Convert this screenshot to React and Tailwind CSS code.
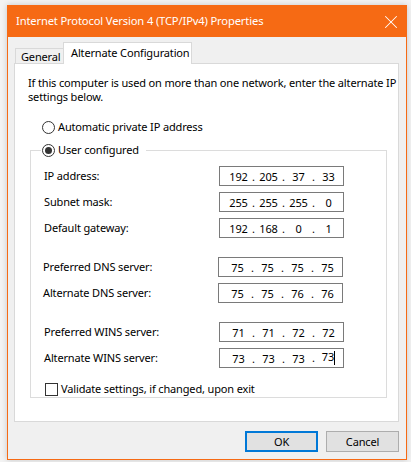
import { X } from 'lucide-react';

const font = { fontFamily: '"Segoe UI", "Noto Sans", sans-serif' };

function Radio({ checked }) {
  return (
    <span className="w-[13px] h-[13px] rounded-full border border-[#333] bg-white flex items-center justify-center shrink-0">
      {checked && <span className="w-[7px] h-[7px] rounded-full bg-[#333]" />}
    </span>
  );
}

function IpBox({ parts, caret }) {
  return (
    <div className="w-[125px] h-[20px] border border-[#7a7a7a] bg-white flex items-center pl-[7px] leading-none">
      {parts.map((p, i) => (
        <div key={i} className="flex items-center">
          {i > 0 && <span className="w-[7px] text-center">.</span>}
          <span className="w-[23px] text-center">
            {p}
            {caret && i === 3 && <span className="inline-block w-px h-[14px] bg-black align-middle" />}
          </span>
        </div>
      ))}
    </div>
  );
}

function Row({ label, parts, shift, caret, className = '' }) {
  return (
    <div className={`flex items-center h-[20px] ${shift ? 'pl-[12px]' : 'pl-[13px]'} ${className}`}>
      <span className="w-[175px]">{label}</span>
      <IpBox parts={parts} caret={caret} />
    </div>
  );
}

export default function App() {
  return (
    <div className="w-[411px] h-[462px] bg-[#f3f3f3] pt-[5px] pl-[7px] text-[11px] tracking-[-0.15px] text-black" style={font}>
      <div className="w-[400px] h-[455px] border border-[#f66a14] bg-[#f0f0f0] flex flex-col shadow-[0_0_6px_rgba(0,0,0,0.18)]">
        <div className="h-[31px] bg-[#f66a14] flex items-center justify-between pl-[8px] pr-[4px] text-white text-[11.2px]">
          <span>Internet Protocol Version 4 (TCP/IPv4) Properties</span>
          <X className="w-[22px] h-[22px]" strokeWidth={1.1} />
        </div>

        <div className="flex items-end h-[21px] mt-[5px] pl-[7px]">
          <div className="w-[49px] h-[15px] border border-b-0 border-[#d9d9d9] bg-[#f0f0f0] flex items-center pl-[5px] leading-none">
            General
          </div>
          <div className="w-[129px] h-[22px] -ml-px -mb-px border border-b-0 border-[#d9d9d9] bg-white relative z-10 flex items-start pt-[3px] pl-[7px] leading-[14px]">
            Alternate Configuration
          </div>
        </div>

        <div className="ml-[6px] w-[385px] h-[359px] border border-[#d9d9d9] bg-white flex flex-col">
          <p className="pt-[12px] pl-[13px] leading-[14px]">
            If this computer is used on more than one network, enter the alternate IP settings below.
          </p>
          <div className="flex items-center gap-[3px] h-[16px] mt-[15px] pl-[27px]">
            <Radio />
            <span>Automatic private IP address</span>
          </div>

          <fieldset className="ml-[15px] mt-[7px] w-[357px] border border-[#dcdcdc] pt-[8px]">
            <legend className="ml-[10px] pl-[1px] pr-[7px] h-[16px]">
              <span className="flex items-center gap-[3px] h-[16px]">
                <Radio checked />
                <span>User configured</span>
              </span>
            </legend>
            <div className="flex flex-col">
              <Row label="IP address:" parts={['192', '205', '37', '33']} />
              <Row label="Subnet mask:" parts={['255', '255', '255', '0']} className="mt-[6px]" />
              <Row label="Default gateway:" parts={['192', '168', '0', '1']} className="mt-[6px]" />
              <Row label="Preferred DNS server:" parts={['75', '75', '75', '75']} shift className="mt-[19px]" />
              <Row label="Alternate DNS server:" parts={['75', '75', '76', '76']} shift className="mt-[6px]" />
              <Row label="Preferred WINS server:" parts={['71', '71', '72', '72']} className="mt-[19px]" />
              <Row label="Alternate WINS server:" parts={['73', '73', '73', '73']} caret className="mt-[6px]" />
              <div className="flex items-center gap-[3px] h-[16px] mt-[13px] pl-[14px]">
                <span className="w-[13px] h-[13px] border border-[#333] bg-white shrink-0" />
                <span>Validate settings, if changed, upon exit</span>
              </div>
            </div>
          </fieldset>
        </div>

        <div className="flex justify-end gap-[8px] mt-[9px] pr-[7px]">
          <button className="w-[73px] h-[21px] border-2 border-[#0078d7] bg-[#e1e1e1] leading-none">OK</button>
          <button className="w-[73px] h-[21px] border border-[#adadad] bg-[#e1e1e1] leading-none">Cancel</button>
        </div>
      </div>
    </div>
  );
}
